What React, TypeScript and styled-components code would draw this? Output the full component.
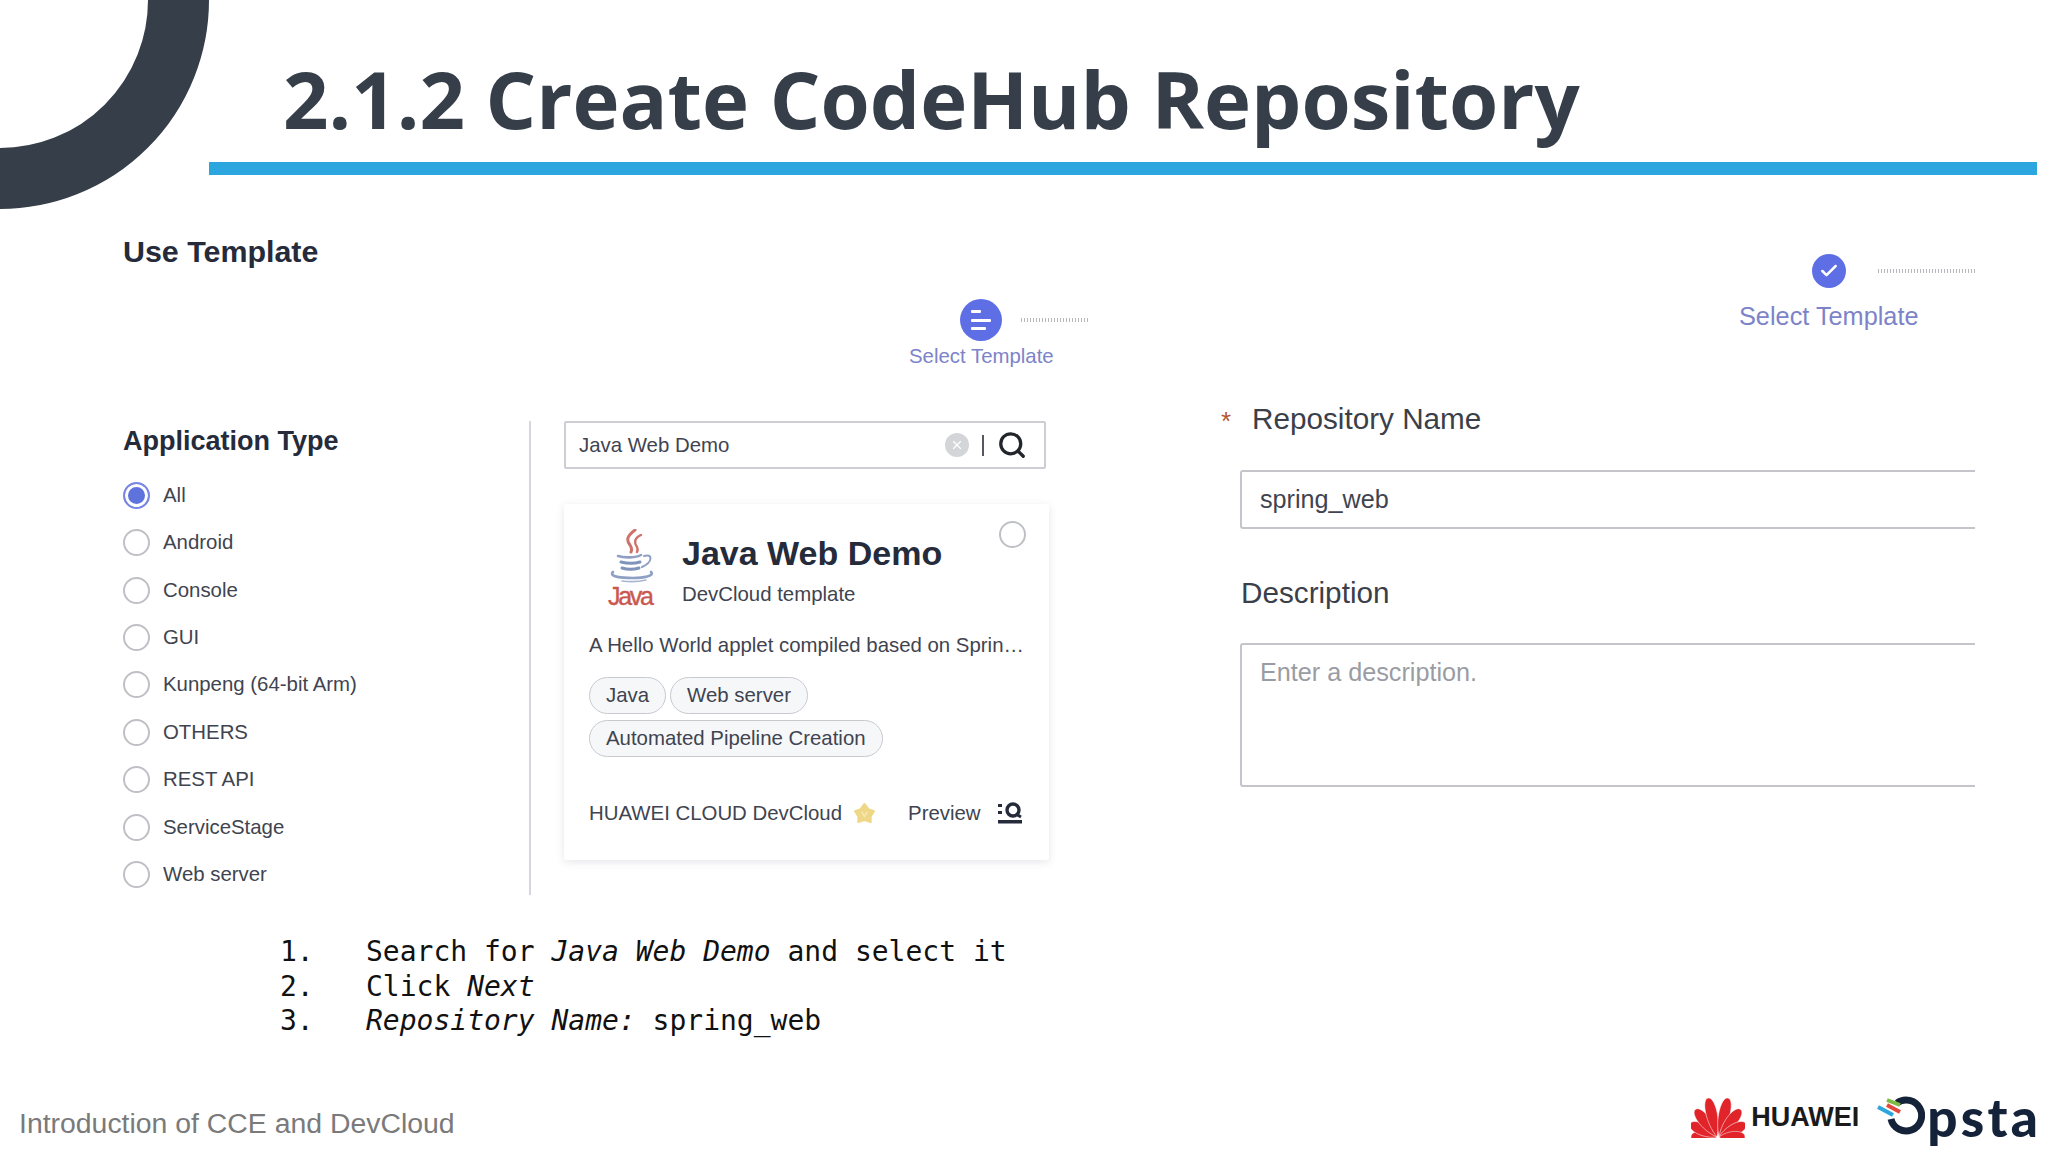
import styled, { createGlobalStyle } from 'styled-components'
import { Search, X, Check } from 'lucide-react'

const GlobalStyle = createGlobalStyle`
    html, body {
        margin: 0;
        padding: 0;
        background: #fff;
    }
    body {
        font-family: "Liberation Sans", Arial, sans-serif;
    }
`

const Slide = styled.div`
    position: relative;
    width: 2048px;
    height: 1152px;
    overflow: hidden;
    background: #fff;
    display: flex;
    flex-direction: column;
`
const CornerArc = styled.div`
    position: absolute;
    left: -209px;
    top: -209px;
    width: 418px;
    height: 418px;
    box-sizing: border-box;
    border: 61px solid #353e49;
    border-radius: 50%;
`
const Header = styled.header`
    height: 175px;
    margin-left: 209px;
    margin-right: 11px;
    box-sizing: border-box;
    border-bottom: 13px solid #2ba6de;
    padding-left: 74px;
    flex: none;
`
const Title = styled.h1`
    margin: 0;
    padding-top: 43px;
    font-family: "Open Sans", sans-serif;
    font-weight: 700;
    font-size: 79.6px;
    line-height: 110px;
    color: #353e49;
    white-space: nowrap;
`
const Body = styled.main`
    flex: none;
    height: 870px;
    display: grid;
    grid-template-columns: 1215px 760px;
`
const LeftShot = styled.section`
    padding-left: 123px;
    display: flex;
    flex-direction: column;
`
const PageHeading = styled.h2`
    margin: 59px 0 0;
    font-size: 30.4px;
    line-height: 34px;
    font-weight: 700;
    color: #252b3a;
`
const Steps = styled.div<{ $pad: number; $top: number }>`
    display: flex;
    flex-direction: column;
    align-items: center;
    width: max-content;
    margin-top: ${p => p.$top}px;
    margin-left: ${p => p.$pad}px;
`
const StepRow = styled.div`
    position: relative;
    display: flex;
    justify-content: center;
`
const StepCircle = styled.div<{ $size: number }>`
    width: ${p => p.$size}px;
    height: ${p => p.$size}px;
    border-radius: 50%;
    background: #5e6fe6;
    display: flex;
    align-items: center;
    justify-content: center;
    color: #fff;
`
const StepLines = styled.div`
    display: flex;
    flex-direction: column;
    gap: 5.5px;
    align-items: flex-start;
    width: 20px;
`
const StepLine = styled.i<{ $w: number }>`
    display: block;
    height: 3px;
    width: ${p => p.$w}px;
    background: #fff;
    border-radius: 1px;
`
const Dots = styled.div<{ $w: number; $gap: number }>`
    position: absolute;
    left: calc(50% + ${p => p.$gap}px);
    top: 50%;
    width: ${p => p.$w}px;
    height: 4px;
    margin-top: -2px;
    background-image: radial-gradient(circle, #b5b7bd 0.8px, transparent 1px);
    background-size: 3px 2px;
`
const StepLabel = styled.div<{ $size: number; $top: number }>`
    margin-top: ${p => p.$top}px;
    font-size: ${p => p.$size}px;
    line-height: 1.15;
    color: #7d83c9;
    white-space: nowrap;
`
const Columns = styled.div`
    margin-top: 53px;
    display: flex;
    align-items: stretch;
`
const TypeColumn = styled.div`
    width: 406px;
    flex: none;
    height: 474px;
    border-right: 2px solid #d6d7dc;
`
const TypeHeading = styled.h3`
    margin: 0 0 10px;
    font-size: 27px;
    line-height: 40px;
    font-weight: 700;
    color: #252b3a;
`
const TypeList = styled.ul`
    list-style: none;
    margin: 0;
    padding: 0;
`
const TypeItem = styled.li`
    display: flex;
    align-items: center;
    gap: 13px;
    height: 47.45px;
    font-size: 20.4px;
    color: #3f4450;
    white-space: nowrap;
`
const Radio = styled.span<{ $on?: boolean }>`
    width: 27px;
    height: 27px;
    box-sizing: border-box;
    border-radius: 50%;
    flex: none;
    border: 2px solid ${p => (p.$on ? '#7a86e6' : '#bfc0c5')};
    background: ${p => (p.$on ? '#5e73dc' : '#fff')};
    box-shadow: ${p => (p.$on ? 'inset 0 0 0 3px #fff' : 'none')};
`
const CardColumn = styled.div`
    margin-left: 33px;
    width: 485px;
    flex: none;
`
const SearchBox = styled.div`
    width: 482px;
    height: 48px;
    box-sizing: border-box;
    border: 2px solid #cdced3;
    border-radius: 2px;
    padding: 0 17px 0 13px;
    display: flex;
    align-items: center;
    font-size: 20.4px;
    color: #3f4450;
`
const SearchText = styled.span`
    flex: 1;
`
const ClearIcon = styled.span`
    width: 24px;
    height: 24px;
    border-radius: 50%;
    background: #d4d5d8;
    color: #fff;
    display: flex;
    align-items: center;
    justify-content: center;
`
const SearchDivider = styled.span`
    width: 2px;
    height: 21px;
    background: #55585f;
    margin: 0 13px 0 13px;
`
const Card = styled.article`
    position: relative;
    margin-top: 35px;
    height: 356px;
    box-sizing: border-box;
    padding: 25px 25px 0;
    background: #fff;
    box-shadow: 0 2px 8px rgba(60, 64, 90, 0.13);
    border-radius: 2px;
`
const CardRadio = styled(Radio)`
    position: absolute;
    top: 17px;
    right: 23px;
`
const CardHead = styled.div`
    display: flex;
    align-items: flex-start;
    gap: 26px;
    padding-left: 19px;
    height: 81px;
`
const CardTitle = styled.div`
    font-size: 34px;
    line-height: 42px;
    margin-top: 3px;
    font-weight: 700;
    color: #252b3a;
    white-space: nowrap;
`
const CardSub = styled.div`
    margin-top: 8px;
    font-size: 20.4px;
    line-height: 24px;
    color: #3f4450;
`
const CardDesc = styled.p`
    margin: 23px 0 0;
    font-size: 20.4px;
    line-height: 24px;
    color: #3f4450;
    white-space: nowrap;
`
const TagRow = styled.div`
    margin-top: 20px;
    display: flex;
    flex-wrap: wrap;
    gap: 6px 4px;
    width: 320px;
`
const Tag = styled.span`
    height: 37px;
    box-sizing: border-box;
    padding: 0 16px;
    border: 1.5px solid #c9cad0;
    border-radius: 19px;
    background: #f6f7f9;
    font-size: 20.4px;
    line-height: 34px;
    color: #3f4450;
    white-space: nowrap;
`
const CardFoot = styled.div`
    position: absolute;
    left: 25px;
    right: 27px;
    bottom: 35px;
    display: flex;
    align-items: center;
    font-size: 20.4px;
    line-height: 24px;
    color: #3f4450;
`
const PreviewText = styled.span`
    margin-left: 32px;
    margin-right: 17px;
`
const Notes = styled.ol`
    margin: 40px 0 0 157px;
    padding: 0;
    list-style: none;
    font-family: "DejaVu Sans Mono", monospace;
    font-size: 28px;
    line-height: 34.4px;
    color: #111;
    white-space: pre;
`
const NoteRow = styled.li`
    display: flex;
`
const NoteNum = styled.span`
    width: 86px;
`
const RightShot = styled.section`
    padding: 62px 0 0 26px;
    overflow: hidden;
`
const FieldLabel = styled.label<{ $top: number; $required?: boolean }>`
    position: relative;
    display: block;
    margin-top: ${p => p.$top}px;
    margin-left: ${p => (p.$required ? 11 : 0)}px;
    font-size: 29.7px;
    line-height: 34px;
    color: #3b3f49;
    white-space: nowrap;
`
const Asterisk = styled.span`
    position: absolute;
    left: -31px;
    top: 2px;
    font-size: 26px;
    color: #b5562f;
`
const Field = styled.div<{ $h: number; $top: number; $muted?: boolean }>`
    height: ${p => p.$h}px;
    margin-top: ${p => p.$top}px;
    margin-left: -1px;
    margin-right: -10px;
    box-sizing: border-box;
    border: 2px solid #c4c5ca;
    border-radius: 3px;
    padding: 12px 18px;
    font-size: 25.2px;
    line-height: 30px;
    color: ${p => (p.$muted ? '#9a9ca3' : '#3f4450')};
`
const Footer = styled.footer`
    flex: none;
    height: 107px;
    box-sizing: border-box;
    display: flex;
    align-items: flex-end;
    justify-content: space-between;
    padding: 0 7px 10px 19px;
`
const FooterText = styled.div`
    font-size: 28.4px;
    line-height: 34px;
    color: #7a7a7a;
    margin-bottom: 2px;
`
const Logos = styled.div`
    display: flex;
    align-items: center;
    height: 50px;
`
const HuaweiWord = styled.span`
    font-family: "Liberation Sans", sans-serif;
    font-weight: 700;
    font-size: 27px;
    color: #1a1a1a;
    margin-left: 6px;
`
const OpstaBox = styled.div`
    display: flex;
    align-items: center;
    margin-left: 18px;
`
const OpstaWord = styled.span`
    font-family: "Lato", sans-serif;
    font-weight: 900;
    font-size: 53px;
    line-height: 50px;
    letter-spacing: 3.2px;
    color: #14233a;
    margin-left: 2px;
`

const types = ['All', 'Android', 'Console', 'GUI', 'Kunpeng (64-bit Arm)', 'OTHERS', 'REST API', 'ServiceStage', 'Web server']

function JavaLogo() {
    return (
        <svg width="48" height="80" viewBox="0 0 48 80">
            <g fill="none" strokeLinecap="round">
                <path d="M27 1c-8 6-9 10-5 15 2 3 2 5 1 7" stroke="#cf7269" strokeWidth="3" />
                <path d="M33 6c-7 3-7 8-4 12 1 2 1 3 0 5" stroke="#cf7269" strokeWidth="2.4" />
                <path d="M10 27c6 2 18 2 23-1" stroke="#8fa0c4" strokeWidth="2.6" />
                <path d="M13 33c6 1.5 14 1.5 19 0" stroke="#7f93bb" strokeWidth="3" />
                <path d="M14 39c5 1.5 12 1.5 17 0" stroke="#7f93bb" strokeWidth="3" />
                <path d="M36 27c9-3 9 6-2 11" stroke="#8fa0c4" strokeWidth="2" />
                <path d="M5 43c-5 5 10 6 20 6 10 0 22-2 18-6" stroke="#8fa0c4" strokeWidth="2.6" />
                <path d="M14 52c8 1 16 1 24-1" stroke="#a9b6d2" strokeWidth="1.6" />
            </g>
            <text x="0" y="76" fontFamily="Liberation Sans, sans-serif" fontSize="25" fill="#c9584e" stroke="#c9584e" strokeWidth="0.4" textLength="46">Java</text>
        </svg>
    )
}

function PreviewIcon() {
    return (
        <svg width="24" height="22" viewBox="0 0 24 22">
            <rect x="0" y="2" width="4" height="3" fill="#252b3a" />
            <rect x="0" y="9" width="4" height="3" fill="#252b3a" />
            <circle cx="15" cy="8" r="6" fill="none" stroke="#252b3a" strokeWidth="3.4" />
            <path d="M18 12l5 3" stroke="#252b3a" strokeWidth="3" />
            <rect x="0" y="18" width="24" height="3.5" fill="#252b3a" />
        </svg>
    )
}

function BadgeStar() {
    return (
        <svg width="23" height="23" viewBox="0 0 24 24" style={{ marginLeft: 11 }}>
            <path d="M12 2l4 5.5 6 2-3.5 5.5 0 6-6.5-2-6.5 2 0-6L2 9.5l6-2z" fill="#eed887" stroke="#eed887" strokeLinejoin="round" strokeWidth="2" />
            <path d="M9 10l3 5 3-5" fill="none" stroke="#f6e7b4" strokeWidth="1.5" />
        </svg>
    )
}

function HuaweiMark() {
    const petals = [
        [-90, 26],
        [-64, 30],
        [-38, 35],
        [-13, 40],
        [13, 40],
        [38, 35],
        [64, 30],
        [90, 26],
    ]
    return (
        <svg width="54" height="42" viewBox="-27 -41 54 42">
            {petals.map(([a, l]) => (
                <path
                    key={a}
                    d={`M0 0C-8 ${-l * 0.4} -7 ${-l} 0 ${-l}C7 ${-l} 8 ${-l * 0.4} 0 0Z`}
                    fill="#e1232a"
                    stroke="#fff"
                    strokeWidth="0.5"
                    transform={`translate(${a < 0 ? -1 : 1} 0) rotate(${a})`}
                />
            ))}
        </svg>
    )
}

function OpstaMark() {
    return (
        <svg width="48" height="50" viewBox="0 0 48 50">
            <path d="M20 11A15.5 15.5 0 1 1 14 27" fill="none" stroke="#14233a" strokeWidth="7" />
            <path d="M1 15l15 8" stroke="#2ba6de" strokeWidth="4" />
            <path d="M10 13l13 7" stroke="#e0483e" strokeWidth="4" />
            <path d="M10 8l13 5" stroke="#7dbb42" strokeWidth="4" />
        </svg>
    )
}

export default function App() {
    return (
        <>
            <GlobalStyle />
            <Slide>
                <CornerArc />
                <Header>
                    <Title>2.1.2 Create CodeHub Repository</Title>
                </Header>
                <Body>
                    <LeftShot>
                        <PageHeading>Use Template</PageHeading>
                        <Steps $pad={786} $top={31}>
                            <StepRow>
                                <StepCircle $size={42}>
                                    <StepLines>
                                        <StepLine $w={10} />
                                        <StepLine $w={20} />
                                        <StepLine $w={15} />
                                    </StepLines>
                                </StepCircle>
                                <Dots $w={69} $gap={39} />
                            </StepRow>
                            <StepLabel $size={20.4} $top={4}>Select Template</StepLabel>
                        </Steps>
                        <Columns>
                            <TypeColumn>
                                <TypeHeading>Application Type</TypeHeading>
                                <TypeList>
                                    {types.map((t, i) => (
                                        <TypeItem key={t}>
                                            <Radio $on={i === 0} />
                                            {t}
                                        </TypeItem>
                                    ))}
                                </TypeList>
                            </TypeColumn>
                            <CardColumn>
                                <SearchBox>
                                    <SearchText>Java Web Demo</SearchText>
                                    <ClearIcon><X size={14} strokeWidth={2} /></ClearIcon>
                                    <SearchDivider />
                                    <Search size={30} strokeWidth={2.6} color="#22252c" />
                                </SearchBox>
                                <Card>
                                    <CardRadio />
                                    <CardHead>
                                        <JavaLogo />
                                        <div>
                                            <CardTitle>Java Web Demo</CardTitle>
                                            <CardSub>DevCloud template</CardSub>
                                        </div>
                                    </CardHead>
                                    <CardDesc>A Hello World applet compiled based on Sprin…</CardDesc>
                                    <TagRow>
                                        <Tag>Java</Tag>
                                        <Tag>Web server</Tag>
                                        <Tag>Automated Pipeline Creation</Tag>
                                    </TagRow>
                                    <CardFoot>
                                        HUAWEI CLOUD DevCloud
                                        <BadgeStar />
                                        <PreviewText>Preview</PreviewText>
                                        <PreviewIcon />
                                    </CardFoot>
                                </Card>
                            </CardColumn>
                        </Columns>
                        <Notes>
                            <NoteRow><NoteNum>1.</NoteNum><span>Search for <em>Java Web Demo</em> and select it</span></NoteRow>
                            <NoteRow><NoteNum>2.</NoteNum><span>Click <em>Next</em></span></NoteRow>
                            <NoteRow><NoteNum>3.</NoteNum><span><em>Repository Name:</em> spring_web</span></NoteRow>
                        </Notes>
                    </LeftShot>
                    <RightShot>
                        <Steps $pad={498} $top={17}>
                            <StepRow>
                                <StepCircle $size={34}><Check size={20} strokeWidth={3} /></StepCircle>
                                <Dots $w={99} $gap={48} />
                            </StepRow>
                            <StepLabel $size={25.3} $top={14}>Select Template</StepLabel>
                        </Steps>
                        <FieldLabel $top={71} $required><Asterisk>*</Asterisk>Repository Name</FieldLabel>
                        <Field $h={59} $top={34}>spring_web</Field>
                        <FieldLabel $top={47}>Description</FieldLabel>
                        <Field $h={144} $top={33} $muted>Enter a description.</Field>
                    </RightShot>
                </Body>
                <Footer>
                    <FooterText>Introduction of CCE and DevCloud</FooterText>
                    <Logos>
                        <HuaweiMark />
                        <HuaweiWord>HUAWEI</HuaweiWord>
                        <OpstaBox>
                            <OpstaMark />
                            <OpstaWord>psta</OpstaWord>
                        </OpstaBox>
                    </Logos>
                </Footer>
            </Slide>
        </>
    )
}
